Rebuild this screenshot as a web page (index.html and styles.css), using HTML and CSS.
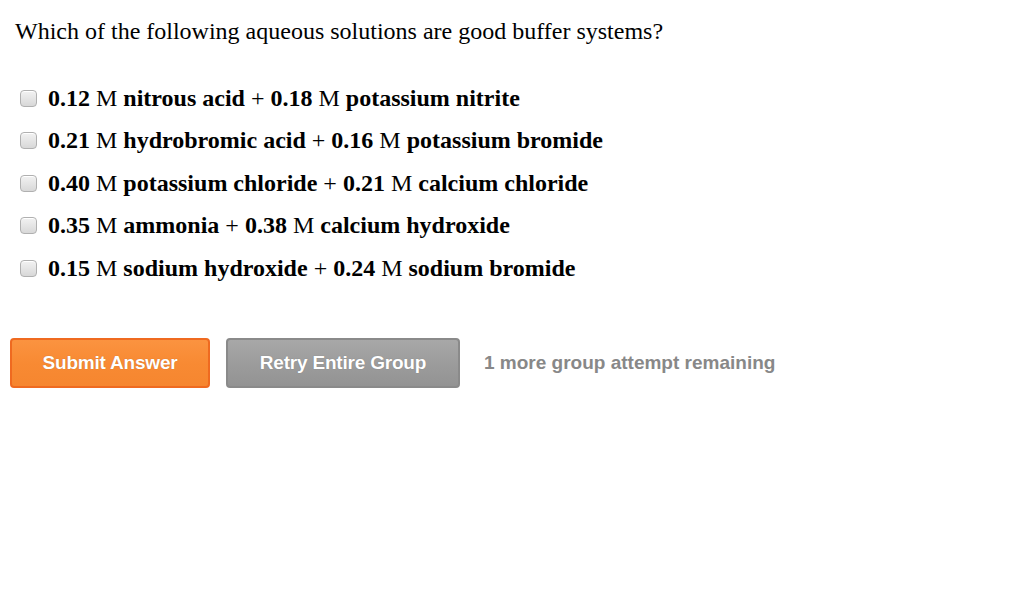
FILE: index.html
```html
<!DOCTYPE html>
<html>
<head>
<meta charset="utf-8">
<link rel="stylesheet" href="styles.css">
</head>
<body>
<div class="question">
  <p class="prompt">Which of the following aqueous solutions are good buffer systems?</p>
  <ul class="choices">
    <li class="choice"><input type="checkbox" class="box"><span><b>0.12</b> M <b>nitrous acid</b> + <b>0.18</b> M <b>potassium nitrite</b></span></li>
    <li class="choice"><input type="checkbox" class="box"><span><b>0.21</b> M <b>hydrobromic acid</b> + <b>0.16</b> M <b>potassium bromide</b></span></li>
    <li class="choice"><input type="checkbox" class="box"><span><b>0.40</b> M <b>potassium chloride</b> + <b>0.21</b> M <b>calcium chloride</b></span></li>
    <li class="choice"><input type="checkbox" class="box"><span><b>0.35</b> M <b>ammonia</b> + <b>0.38</b> M <b>calcium hydroxide</b></span></li>
    <li class="choice"><input type="checkbox" class="box"><span><b>0.15</b> M <b>sodium hydroxide</b> + <b>0.24</b> M <b>sodium bromide</b></span></li>
  </ul>
  <div class="actions">
    <button class="btn btn-submit">Submit Answer</button>
    <button class="btn btn-retry">Retry Entire Group</button>
    <span class="attempts">1 more group attempt remaining</span>
  </div>
</div>
</body>
</html>
```

FILE: styles.css
```css
html, body {
  margin: 0;
  background: #fff;
}

.question {
  padding: 16px 10px 0 15px;
  font-family: "Liberation Serif", "Times New Roman", serif;
  color: #000;
}

.prompt {
  margin: 0;
  font-size: 24px;
  line-height: 30px;
}

.choices {
  list-style: none;
  margin: 31px 0 0 0;
  padding: 0;
}

.choice {
  display: flex;
  align-items: center;
  height: 42.5px;
  font-size: 24px;
}

.box {
  width: 17px;
  height: 17px;
  margin: 0 11px 0 5px;
  appearance: none;
  border: 1px solid #b0b0b0;
  border-radius: 4px;
  background: linear-gradient(#f2f2f2, #d8d8d8);
  box-shadow: inset 0 1px 0 #fff;
}

.actions {
  display: flex;
  align-items: center;
  margin: 48px 0 0 -5px;
  font-family: "Liberation Sans", Arial, sans-serif;
}

.btn {
  height: 50px;
  border-radius: 4px;
  font-family: "Liberation Sans", Arial, sans-serif;
  font-weight: bold;
  font-size: 19px;
  letter-spacing: -0.2px;
  color: #fff;
  padding: 0;
  text-shadow: 0 0 1px rgba(0,0,0,0.25);
}

.btn-submit {
  width: 200px;
  background: linear-gradient(#fb9340, #f88a33 50%, #f6862f);
  border: 2px solid #ef6a20;
}

.btn-retry {
  width: 234px;
  margin-left: 16px;
  background: linear-gradient(#a8a8a8, #9c9c9c 50%, #939393);
  border: 2px solid #8a8a8a;
}

.attempts {
  margin-left: 24px;
  font-weight: bold;
  font-size: 19px;
  color: #888;
}
```
